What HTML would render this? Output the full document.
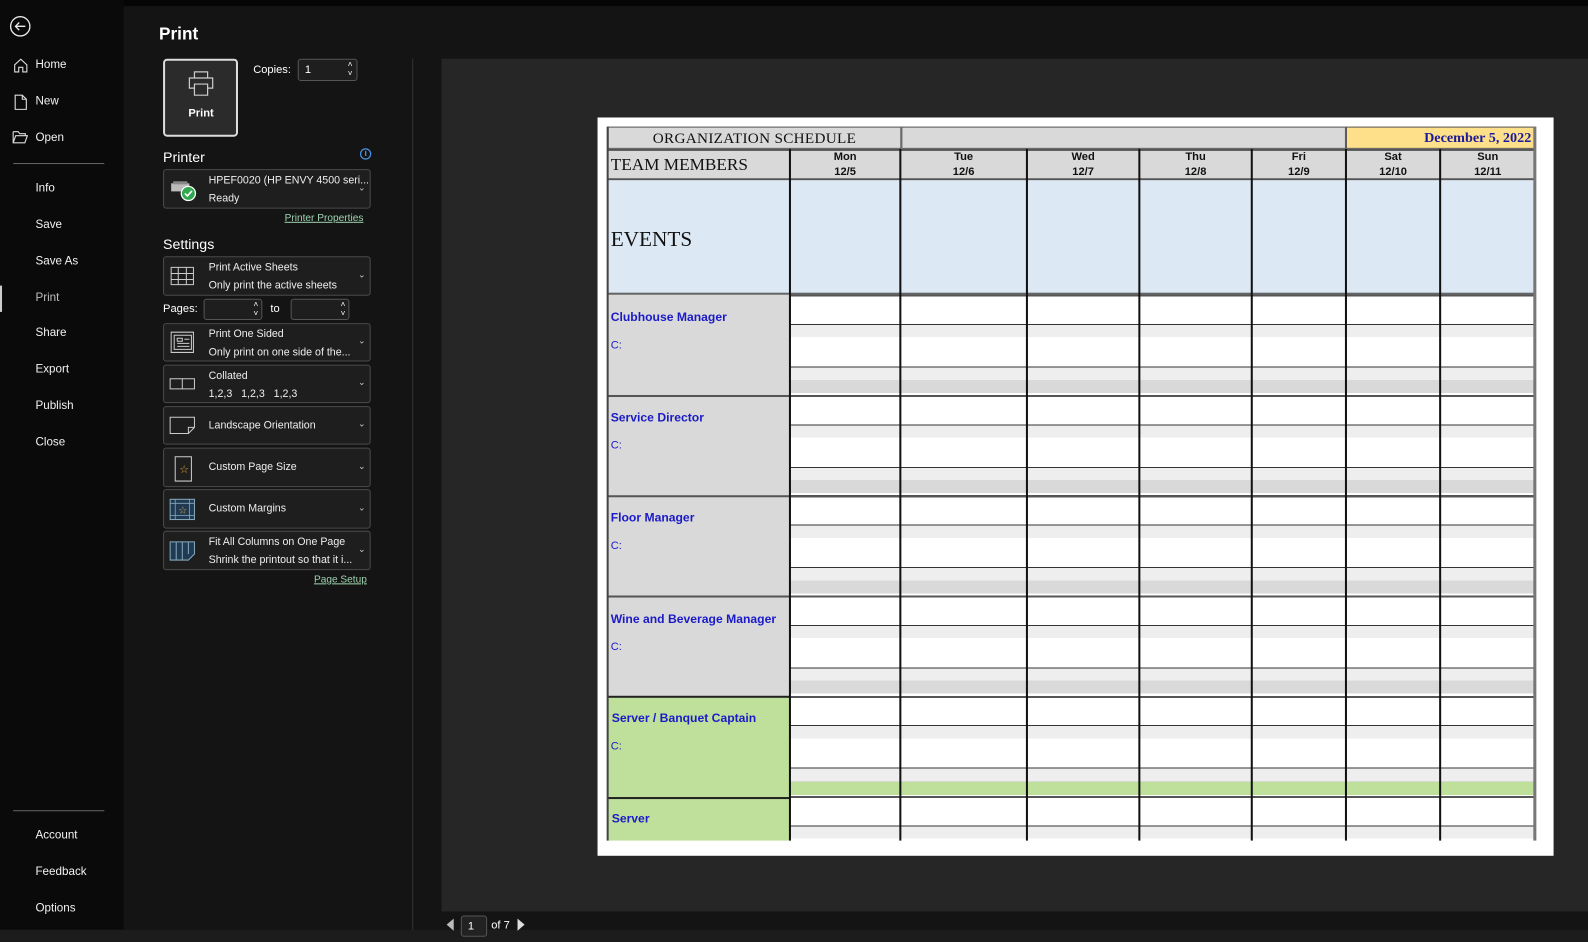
<!DOCTYPE html>
<html><head><meta charset="utf-8">
<style>
*{box-sizing:border-box;margin:0;padding:0}
html,body{width:1588px;height:942px;overflow:hidden;background:#141414}
#w{width:1568px;height:930px;position:relative;transform:scale(1.01276);transform-origin:0 0;font-family:"Liberation Sans",sans-serif;color:#fff;background:#141414}
.a{position:absolute}
.side{left:0;top:0;width:122px;height:930px;background:#0a0a0a}
.nav{position:absolute;left:35px;font-size:11.5px;color:#f2f2f2}
.dd{position:absolute;left:161px;width:205px;border:1px solid #4a4a4a;border-radius:3px;background:#1e1e1e;font-size:10.5px;color:#eee}
.dd .t{position:absolute;left:44px;line-height:18px;white-space:nowrap}
.dd .c{position:absolute;right:4px;top:50%;margin-top:-7px;font-size:9px;color:#ccc}
.dd .ic{position:absolute;left:5px;top:50%;margin-top:-12px;width:26px;height:24px}
.sheet{left:590px;top:116px;width:944px;height:729px;background:#fff}
.serif{font-family:"Liberation Serif",serif}
.hd{font-size:11px;font-weight:bold;color:#111;text-align:center;line-height:15px}
.nm{color:#1a1ac8;font-weight:bold;font-size:12px}
.vl{position:absolute;width:2px;background:#111;top:147px;height:683px}
</style></head><body><div id="w">
<div class="a" style="left:0;top:0;width:1568px;height:6px;background:#050505"></div>
<div class="a side"></div>
<svg class="a" style="left:9px;top:15px" width="22" height="22" viewBox="0 0 22 22"><circle cx="11" cy="11" r="9.5" fill="none" stroke="#eee" stroke-width="1.3"/><path d="M16 11H6.5M10 7.2L6.3 11 10 14.8" fill="none" stroke="#eee" stroke-width="1.3"/></svg>
<svg class="a" style="left:13px;top:57px" width="15" height="15" viewBox="0 0 15 15"><path d="M1.5 7L7.5 1.5 13.5 7V14H9.5V9.5H5.5V14H1.5Z" fill="none" stroke="#ddd" stroke-width="1.1"/></svg>
<div class="nav" style="top:58px">Home</div>
<svg class="a" style="left:14px;top:93px" width="13" height="16" viewBox="0 0 13 16"><path d="M1 1H8L12 5V15H1Z M8 1V5H12" fill="none" stroke="#ddd" stroke-width="1.1"/></svg>
<div class="nav" style="top:94px">New</div>
<svg class="a" style="left:12px;top:129px" width="16" height="13" viewBox="0 0 16 13"><path d="M1 1H6L7.5 3H13V5 M1 1V12H12.5L15 5H3.5L1 12" fill="none" stroke="#ddd" stroke-width="1.1"/></svg>
<div class="nav" style="top:130px">Open</div>
<div class="a" style="left:13px;top:161px;width:90px;height:1px;background:#666"></div>
<div class="nav" style="top:180px">Info</div>
<div class="nav" style="top:216px">Save</div>
<div class="nav" style="top:252px">Save As</div>
<div class="a" style="left:0;top:282px;width:2px;height:26px;background:#ccc"></div>
<div class="nav" style="top:288px;color:#bfbfbf">Print</div>
<div class="nav" style="top:323px">Share</div>
<div class="nav" style="top:359px">Export</div>
<div class="nav" style="top:395px">Publish</div>
<div class="nav" style="top:431px">Close</div>
<div class="a" style="left:13px;top:800px;width:90px;height:1px;background:#666"></div>
<div class="nav" style="top:819px">Account</div>
<div class="nav" style="top:855px">Feedback</div>
<div class="nav" style="top:891px">Options</div>

<div class="a" style="left:157px;top:24px;font-size:17px;font-weight:bold">Print</div>
<div class="a" style="left:161px;top:58px;width:74px;height:77px;border:2px solid #ddd;border-radius:4px;background:#2b2b2b"></div>
<svg class="a" style="left:185px;top:69px" width="27" height="27" viewBox="0 0 27 27"><path d="M7 8V2H20V8 M7 18H2V8H25V18H20 M7 14H20V25H7Z" fill="none" stroke="#ccc" stroke-width="1.2"/></svg>
<div class="a" style="left:186px;top:106px;font-size:11px;font-weight:bold">Print</div>
<div class="a" style="left:250px;top:63px;font-size:11px">Copies:</div>
<div class="a" style="left:294px;top:58px;width:59px;height:22px;border:1px solid #555;border-radius:3px;background:#1e1e1e;font-size:11px;padding:4px 6px">1<span style="position:absolute;right:4px;top:0;font-size:8px;line-height:9px">˄<br>˅</span></div>
<div class="a" style="left:161px;top:147px;font-size:14px">Printer</div>
<svg class="a" style="left:355px;top:146px" width="12" height="12"><circle cx="6" cy="6" r="5" fill="none" stroke="#4a90e2" stroke-width="1.2"/><rect x="5.4" y="3" width="1.3" height="5" fill="#4a90e2"/></svg>
<div class="dd" style="top:167px;height:39px"><div class="ic"><svg width="30" height="26" viewBox="0 0 30 26"><rect x="2" y="6" width="18" height="8" fill="#bbb"/><rect x="4" y="4" width="14" height="3" fill="#888"/><circle cx="19" cy="16" r="7" fill="#2fa84f" stroke="#fff" stroke-width="1.3"/><path d="M15.5 16L18 18.5 22.5 13.5" fill="none" stroke="#fff" stroke-width="1.6"/></svg></div><div class="t" style="top:1px">HPEF0020 (HP ENVY 4500 seri...<br>Ready</div><div class="c">⌄</div></div>
<div class="a" style="left:281px;top:210px;font-size:10px;color:#9fd3b0;text-decoration:underline;white-space:nowrap">Printer Properties</div>
<div class="a" style="left:161px;top:233px;font-size:14px">Settings</div>
<div class="dd" style="top:253px;height:39px"><div class="ic"><svg width="26" height="24"><path d="M2 3H24V20H2Z M2 9H24 M2 15H24 M9 3V20 M17 3V20" fill="none" stroke="#ccc"/></svg></div><div class="t" style="top:1px">Print Active Sheets<br>Only print the active sheets</div><div class="c">⌄</div></div>
<div class="a" style="left:161px;top:299px;font-size:11px">Pages:</div>
<div class="a" style="left:201px;top:295px;width:58px;height:21px;border:1px solid #555;border-radius:3px;background:#1e1e1e"><span style="position:absolute;right:3px;top:0;font-size:8px;line-height:9px">˄<br>˅</span></div>
<div class="a" style="left:267px;top:299px;font-size:11px">to</div>
<div class="a" style="left:287px;top:295px;width:58px;height:21px;border:1px solid #555;border-radius:3px;background:#1e1e1e"><span style="position:absolute;right:3px;top:0;font-size:8px;line-height:9px">˄<br>˅</span></div>
<div class="dd" style="top:319px;height:38px"><div class="ic"><svg width="26" height="24"><path d="M2 2H24V22H2Z M5 5H22V19H5Z M8 8H13V11H8Z M15 9H20 M8 13H20 M8 16H20" fill="none" stroke="#ccc"/></svg></div><div class="t" style="top:1px">Print One Sided<br>Only print on one side of the...</div><div class="c">⌄</div></div>
<div class="dd" style="top:360px;height:38px"><div class="ic"><svg width="26" height="24"><path d="M1 7H25V17H1Z M13 7V17" fill="none" stroke="#ccc"/></svg></div><div class="t" style="top:1px">Collated<br>1,2,3 &nbsp;&nbsp;1,2,3 &nbsp;&nbsp;1,2,3</div><div class="c">⌄</div></div>
<div class="dd" style="top:401px;height:38px"><div class="ic"><svg width="26" height="24"><path d="M1 4H25V14L19 20H1Z M19 20V14H25" fill="none" stroke="#ccc"/></svg></div><div class="t" style="top:9px">Landscape Orientation</div><div class="c">⌄</div></div>
<div class="dd" style="top:442px;height:39px"><div class="ic"><svg width="26" height="26"><path d="M6 1H22V25H6Z" fill="none" stroke="#ccc"/><text x="10" y="17" font-size="11" fill="#e8a33a">☆</text></svg></div><div class="t" style="top:9px">Custom Page Size</div><div class="c">⌄</div></div>
<div class="dd" style="top:483px;height:39px"><div class="ic"><svg width="26" height="24"><rect x="1" y="2" width="24" height="20" fill="#1f3a52" stroke="#8ab"/><path d="M6 2V22 M20 2V22 M1 6H25 M1 18H25" stroke="#8ab" stroke-width=".8"/><text x="9" y="16" font-size="10" fill="#e8a33a">☆</text></svg></div><div class="t" style="top:9px">Custom Margins</div><div class="c">⌄</div></div>
<div class="dd" style="top:524px;height:39px"><div class="ic"><svg width="26" height="24"><path d="M1 3H25V15L19 21H1Z M7 3V21 M13 3V21 M19 3V15" fill="#1f3a52" stroke="#8ab"/></svg></div><div class="t" style="top:1px">Fit All Columns on One Page<br>Shrink the printout so that it i...</div><div class="c">⌄</div></div>
<div class="a" style="left:310px;top:567px;font-size:10px;color:#9fd3b0;text-decoration:underline">Page Setup</div>
<div class="a" style="left:407px;top:58px;width:1px;height:872px;background:#333"></div>

<div class="a" style="left:436px;top:58px;width:1132px;height:842px;background:#262626"></div>
<div class="a" style="left:0;top:918px;width:1568px;height:12px;background:#1c1c1c"></div>
<div class="a" style="left:441px;top:907px;width:0;height:0;border-top:6px solid transparent;border-bottom:6px solid transparent;border-right:7px solid #bbb"></div>
<div class="a" style="left:455px;top:904px;width:26px;height:21px;border:1px solid #555;border-radius:3px;background:#222;font-size:11px;padding:4px 6px">1</div>
<div class="a" style="left:485px;top:908px;font-size:11px">of 7</div>
<div class="a" style="left:511px;top:907px;width:0;height:0;border-top:6px solid transparent;border-bottom:6px solid transparent;border-left:7px solid #ddd"></div>

<div class="a sheet"></div>
<div class="a serif" style="left:600px;top:125px;width:290px;height:22px;background:#d9d9d9;border:1px solid #555;font-size:15px;color:#111;text-align:center;line-height:22px;letter-spacing:.3px">ORGANIZATION SCHEDULE</div>
<div class="a" style="left:890px;top:125px;width:439px;height:22px;background:#d9d9d9;border:1px solid #555"></div>
<div class="a serif" style="left:1329px;top:125px;width:187px;height:22px;background:#ffe08a;border:1px solid #555;font-size:14px;font-weight:bold;color:#1a1a9a;text-align:right;line-height:22px;padding-right:3px">December 5, 2022</div>
<div class="a" style="left:600px;top:147px;width:916px;height:31px;background:#d9d9d9;border-top:2px solid #555;border-bottom:2px solid #555"></div>
<div class="a serif" style="left:603px;top:153px;font-size:17px;color:#111">TEAM MEMBERS</div>
<div class="a hd" style="left:780px;top:148px;width:109px">Mon<br>12/5</div>
<div class="a hd" style="left:889px;top:148px;width:125px">Tue<br>12/6</div>
<div class="a hd" style="left:1014px;top:148px;width:111px">Wed<br>12/7</div>
<div class="a hd" style="left:1125px;top:148px;width:111px">Thu<br>12/8</div>
<div class="a hd" style="left:1236px;top:148px;width:93px">Fri<br>12/9</div>
<div class="a hd" style="left:1329px;top:148px;width:93px">Sat<br>12/10</div>
<div class="a hd" style="left:1422px;top:148px;width:94px">Sun<br>12/11</div>
<div class="a" style="left:600px;top:178px;width:916px;height:114px;background:#dce9f5;border-bottom:3px solid #666"></div>
<div class="a serif" style="left:603px;top:224px;font-size:21px;color:#111">EVENTS</div>

<div class="a" style="left:600px;top:291px;width:916px;height:539px;background:
repeating-linear-gradient(to bottom,#555 0 2px,#fff 2px 29px,#333 29px 30px,#eee 30px 42px,#fff 42px 71px,#333 71px 72px,#eee 72px 84px,#d9d9d9 84px 97px,#fff 97px 99px)"></div>
<div class="a" style="left:780px;top:772px;width:736px;height:13px;background:#bfe09a"></div>
<div class="a" style="left:600px;top:291px;width:180px;height:396px;background:#d9d9d9"></div>
<div class="a" style="left:600px;top:688px;width:180px;height:142px;background:#bfe09a"></div>
<div class="a" style="left:600px;top:390px;width:180px;height:2px;background:#555"></div>
<div class="a" style="left:600px;top:489px;width:180px;height:2px;background:#555"></div>
<div class="a" style="left:600px;top:588px;width:180px;height:2px;background:#555"></div>
<div class="a" style="left:600px;top:687px;width:180px;height:2px;background:#222"></div>
<div class="a" style="left:600px;top:787px;width:180px;height:2px;background:#222"></div>
<div class="a nm" style="left:603px;top:306px">Clubhouse Manager</div>
<div class="a nm" style="left:603px;top:335px;font-weight:normal;font-size:11px">C:</div>
<div class="a nm" style="left:603px;top:405px">Service Director</div>
<div class="a nm" style="left:603px;top:434px;font-weight:normal;font-size:11px">C:</div>
<div class="a nm" style="left:603px;top:504px">Floor Manager</div>
<div class="a nm" style="left:603px;top:533px;font-weight:normal;font-size:11px">C:</div>
<div class="a nm" style="left:603px;top:604px">Wine and Beverage Manager</div>
<div class="a nm" style="left:603px;top:633px;font-weight:normal;font-size:11px">C:</div>
<div class="a nm" style="left:604px;top:702px">Server / Banquet Captain</div>
<div class="a nm" style="left:603px;top:731px;font-weight:normal;font-size:11px">C:</div>
<div class="a nm" style="left:604px;top:801px">Server</div>

<div class="vl" style="left:599px;top:125px;height:705px;background:#444"></div>
<div class="vl" style="left:779px"></div>
<div class="vl" style="left:888px"></div>
<div class="vl" style="left:1013px"></div>
<div class="vl" style="left:1124px"></div>
<div class="vl" style="left:1235px"></div>
<div class="vl" style="left:1328px"></div>
<div class="vl" style="left:1421px"></div>
<div class="vl" style="left:1514px;top:125px;height:705px;background:#777;width:3px"></div>
</div></body></html>
